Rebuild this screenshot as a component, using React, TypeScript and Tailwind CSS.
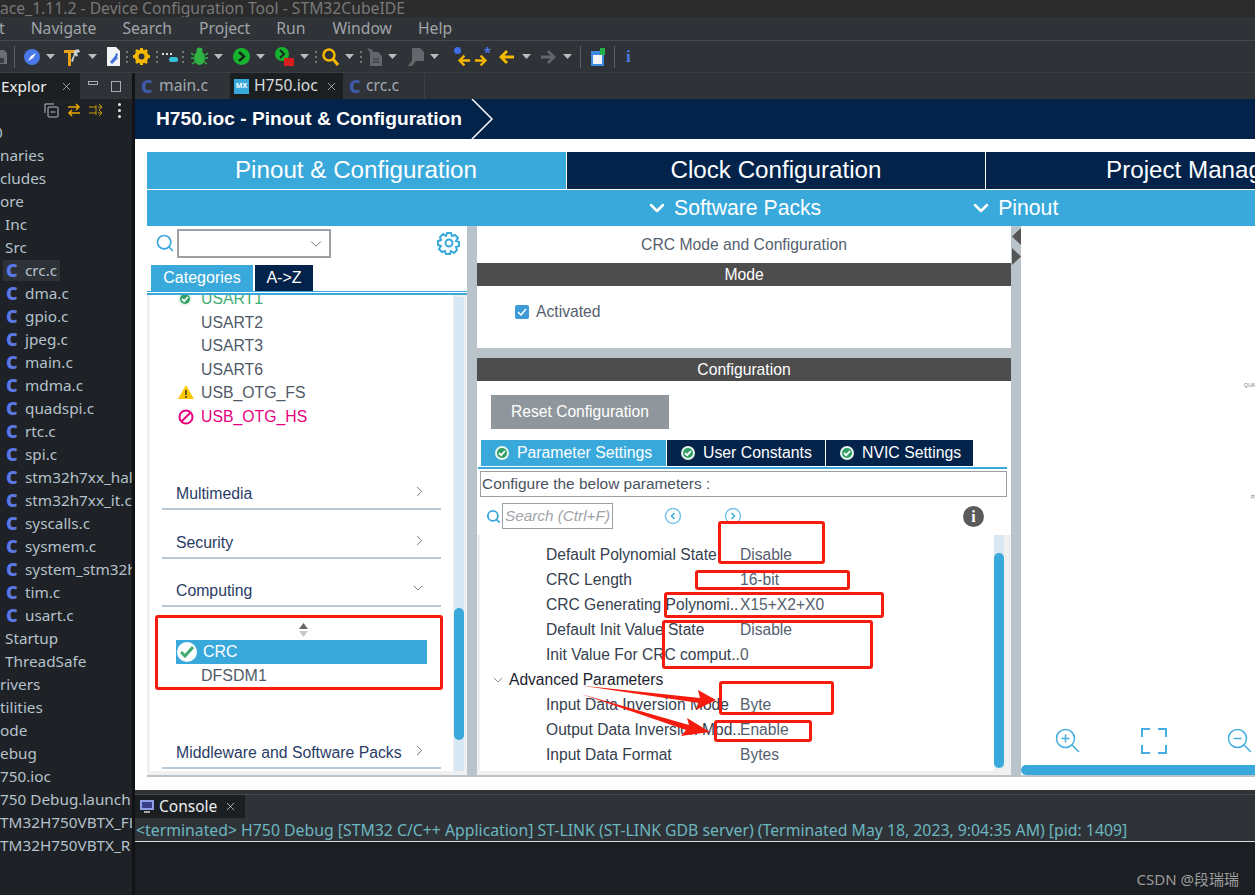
import { ChevronDown, ChevronRight, X, Search } from 'lucide-react';

const ide = "font-['Noto_Sans','Liberation_Sans',sans-serif]";

const files = ['dma.c', 'gpio.c', 'jpeg.c', 'main.c', 'mdma.c', 'quadspi.c', 'rtc.c', 'spi.c', 'stm32h7xx_hal', 'stm32h7xx_it.c', 'syscalls.c', 'sysmem.c', 'system_stm32h', 'tim.c', 'usart.c'];
const rowsAfter = [['Startup', 'pl-[5px]'], ['ThreadSafe', 'pl-[5px]'], ['rivers', ''], ['tilities', ''], ['ode', ''], ['ebug', ''], ['750.ioc', ''], ['750 Debug.launch', ''], ['TM32H750VBTX_FL', ''], ['TM32H750VBTX_R', '']];

const params: [string, string][] = [
  ['Default Polynomial State', 'Disable'],
  ['CRC Length', '16-bit'],
  ['CRC Generating Polynomi..', 'X15+X2+X0'],
  ['Default Init Value State', 'Disable'],
  ['Init Value For CRC comput..', '0'],
];
const advanced: [string, string][] = [
  ['Input Data Inversion Mode', 'Byte'],
  ['Output Data Inversion Mod..', 'Enable'],
  ['Input Data Format', 'Bytes'],
];

function Drop({ className = '' }: { className?: string }) {
  return <svg width="9" height="5" viewBox="0 0 9 5" className={className}><path d="M0 0h9L4.500 5z" fill="#b9bdc1" /></svg>;
}

function Dots({ className = '' }: { className?: string }) {
  return (
    <div className={`flex flex-col gap-[3px] ${className}`}>
      <span className="w-[2px] h-[2px] bg-[#777]" />
      <span className="w-[2px] h-[2px] bg-[#777]" />
      <span className="w-[2px] h-[2px] bg-[#777]" />
    </div>
  );
}

function Sep({ className = '' }: { className?: string }) {
  return <span className={`w-px h-[22px] bg-[#5a5e62] ${className}`} />;
}

function YellowArrow({ flip = false, color = '#f5b800' }: { flip?: boolean; color?: string }) {
  return (
    <svg width="17" height="16" viewBox="0 0 17 16" className={flip ? 'rotate-180' : ''}>
      <path d="M8 1L1 8l7 7 2-2-3.500-3.500H16v-3H6.500L10 3z" fill={color} />
    </svg>
  );
}

function Toolbar() {
  return (
    <div className="h-[32px] bg-[#2f3337] flex items-center border-b border-[#3a3e42] shrink-0 overflow-hidden">
      <svg width="16" height="16" viewBox="0 0 16 16" className="-ml-[8px] shrink-0"><path d="M1 1h11l3 3v11H1z" fill="#6b6f73" /><rect x="4" y="9" width="8" height="5" fill="#3a3e42" /></svg>
      <Sep className="ml-[6px]" />
      <svg width="16" height="18" viewBox="0 0 16 18" className="ml-[9px]"><circle cx="8" cy="9" r="8" fill="#4a78e8" /><path d="M12 5L9 10 4 13l3-5z" fill="#fff" /></svg>
      <Drop className="ml-[6px]" />
      <svg width="18" height="20" viewBox="0 0 18 20" className="ml-[8px]"><path d="M1 3h11v3H8v13H5V6H1z" fill="#e8a317" /><path d="M12 3c3-2 5 0 5 2l-3 1 1 3c-2 1-3 0-3-1l-2 7-2-1 3-7c-1-1 0-3 1-4z" fill="#c8ccd0" /></svg>
      <Drop className="ml-[7px]" />
      <svg width="15" height="19" viewBox="0 0 15 19" className="ml-[9px]"><path d="M1 0h9l4 4v15H1z" fill="#f1f3f5" /><path d="M4 15l5-6 1-3 2 1-1 3 1 1-6 6z" fill="#3f6fd8" /></svg>
      <Dots className="ml-[5px]" />
      <svg width="17" height="17" viewBox="0 0 17 17" className="ml-[5px]"><circle cx="8.500" cy="8.500" r="5" fill="none" stroke="#f5b800" strokeWidth="4" /><path d="M7 0h3v3H7zM7 14h3v3H7zM0 7h3v3H0zM14 7h3v3h-3zM2 3l2-2 2 2-2 2zM11 3l2-2 2 2-2 2zM2 14l2-2 2 2-2 2zM11 14l2-2 2 2-2 2z" fill="#f5b800" /></svg>
      <Dots className="ml-[6px]" />
      <svg width="16" height="10" viewBox="0 0 16 10" className="ml-[4px]"><rect x="0" y="1" width="2" height="2" fill="#ddd" /><rect x="4" y="1" width="2" height="2" fill="#ddd" /><rect x="8" y="1" width="2" height="2" fill="#ddd" /><rect x="7" y="5" width="9" height="5" rx="2.500" fill="#35c2d8" /></svg>
      <Dots className="ml-[4px]" />
      <svg width="17" height="19" viewBox="0 0 17 19" className="ml-[7px]"><ellipse cx="8.500" cy="11" rx="5.500" ry="7" fill="#2fb344" /><circle cx="8.500" cy="3.500" r="3" fill="#2fb344" /><path d="M0 6l3 2M17 6l-3 2M0 11h3M17 11h-3M1 17l3-2M16 17l-3-2" stroke="#2fb344" strokeWidth="1.500" /></svg>
      <Drop className="ml-[6px]" />
      <svg width="17" height="17" viewBox="0 0 17 17" className="ml-[10px]"><circle cx="8.500" cy="8.500" r="8.500" fill="#18b32e" /><path d="M6 4l5 4.500L6 13" fill="none" stroke="#14281a" strokeWidth="2.500" /></svg>
      <Drop className="ml-[6px]" />
      <svg width="19" height="20" viewBox="0 0 19 20" className="ml-[10px]"><circle cx="7" cy="7" r="7" fill="#18b32e" /><path d="M5 3l4 4-4 4" fill="none" stroke="#14281a" strokeWidth="2" /><rect x="9" y="11" width="10" height="8" rx="1" fill="#d81e1e" /></svg>
      <Drop className="ml-[6px]" />
      <Dots className="ml-[6px]" />
      <svg width="17" height="18" viewBox="0 0 17 18" className="ml-[5px]"><circle cx="7" cy="7" r="5.500" fill="none" stroke="#f5b800" strokeWidth="2.500" /><path d="M11 11l5 6" stroke="#f5b800" strokeWidth="3" /></svg>
      <Drop className="ml-[6px]" />
      <Dots className="ml-[6px]" />
      <svg width="16" height="18" viewBox="0 0 16 18" className="ml-[5px]"><path d="M3 4h8l4 4v10H3z" fill="#63676b" /><path d="M0 0l6 2-2 4z" fill="#63676b" /><path d="M6 11h6M6 14h6" stroke="#2f3337" /></svg>
      <Drop className="ml-[5px]" />
      <svg width="16" height="18" viewBox="0 0 16 18" className="ml-[11px]"><path d="M4 0h8l4 4v9H4z" fill="#63676b" /><path d="M0 18l5-7 3 2-4 5z" fill="#63676b" /></svg>
      <Drop className="ml-[6px]" />
      <div className="ml-[15px] relative w-[17px] h-[20px]">
        <span className="absolute left-[0px] top-[0px] w-[7px] h-[7px] rounded-full bg-[#3f6fe8]" />
        <svg width="14" height="13" viewBox="0 0 17 16" className="absolute left-[3px] top-[7px]"><path d="M8 1L1 8l7 7 2-2-3.500-3.500H16v-3H6.500L10 3z" fill="#f5b800" /></svg>
      </div>
      <div className="ml-[3px] relative w-[17px] h-[20px]">
        <span className="absolute right-[0px] top-[0px] text-[13px] leading-[10px] text-[#4a78e8] font-bold">*</span>
        <svg width="14" height="13" viewBox="0 0 17 16" className="absolute left-[0px] top-[7px] rotate-180"><path d="M8 1L1 8l7 7 2-2-3.500-3.500H16v-3H6.500L10 3z" fill="#f5b800" /></svg>
      </div>
      <div className="ml-[7px] flex"><YellowArrow /></div>
      <Drop className="ml-[7px]" />
      <div className="ml-[9px] flex"><YellowArrow flip color="#63676b" /></div>
      <Drop className="ml-[6px]" />
      <Sep className="ml-[8px]" />
      <svg width="15" height="18" viewBox="0 0 15 18" className="ml-[10px]"><rect x="0" y="3" width="13" height="15" fill="#3d8be0" /><rect x="2" y="7" width="9" height="9" fill="#f2f4f6" /><rect x="9" y="0" width="5" height="7" fill="#22b14c" /></svg>
      <Sep className="ml-[8px]" />
      <span className="ml-[11px] text-[#4a78e8] text-[17px] font-bold leading-none font-['Liberation_Serif',serif]">i</span>
    </div>
  );
}

function Sidebar() {
  return (
    <div className={`w-[132px] shrink-0 flex flex-col bg-[#1e2125] overflow-hidden ${ide}`}>
      <div className="h-[26px] flex bg-[#2f3337] shrink-0 text-[#eceff1]">
        <div className="w-[80px] bg-[#1c1f22] flex items-center pl-[1px] text-[15.3px]">
          Explor
          <X size={13} strokeWidth={1.25} className="ml-[13px] text-[#d5d8da]" />
        </div>
        <div className="flex items-center">
          <span className="ml-[8px] w-[10px] h-[4px] border border-[#a8acb0] -mt-[6px]" />
          <span className="ml-[13px] w-[10px] h-[11px] border border-[#a8acb0]" />
        </div>
      </div>
      <div className="h-[22px] flex items-center justify-end pr-[11px] gap-[8px] shrink-0">
        <svg width="15" height="15" viewBox="0 0 15 15"><path d="M1 10V1h9" fill="none" stroke="#b8bcc0" /><rect x="4" y="4" width="10" height="10" rx="1" fill="none" stroke="#b8bcc0" /><path d="M6.500 9h5" stroke="#b8bcc0" /></svg>
        <svg width="14" height="14" viewBox="0 0 14 14"><path d="M1 4h10M9 1l3 3-3 3M13 10H3M5 7l-3 3 3 3" fill="none" stroke="#e8a800" strokeWidth="1.500" /></svg>
        <svg width="14" height="14" viewBox="0 0 14 14"><path d="M0 4h7M0 10h7M7 2v10M9 4h4M9 10h4M10 1l3 3-3 3M10 7l3 3-3 3" fill="none" stroke="#c89a10" /></svg>
        <div className="flex flex-col gap-[3px] ml-[7px]">
          <span className="w-[3px] h-[3px] rounded-full bg-[#e4e6e8]" />
          <span className="w-[3px] h-[3px] rounded-full bg-[#e4e6e8]" />
          <span className="w-[3px] h-[3px] rounded-full bg-[#e4e6e8]" />
        </div>
      </div>
      <div className="text-[15.3px] text-[#b5c1cc] whitespace-nowrap [&>div]:h-[23px] [&>div]:leading-[23px]">
        <div className="-ml-[6px]">0</div>
        <div>naries</div>
        <div>cludes</div>
        <div>ore</div>
        <div className="pl-[5px]">Inc</div>
        <div className="pl-[5px]">Src</div>
        <div className="flex items-center pl-[3px]">
          <div className="h-[21px] w-[57px] bg-[#2e3236] flex items-center pl-[3px]">
            <span className="w-[19px] text-[#5b78e6] font-black text-[18px]">C</span>crc.c
          </div>
        </div>
        {files.map((f) => (
          <div key={f} className="flex items-center pl-[6px]">
            <span className="w-[19px] shrink-0 text-[#5b78e6] font-black text-[18px]">C</span>{f}
          </div>
        ))}
        {rowsAfter.map(([t, c]) => (
          <div key={t} className={c}>{t}</div>
        ))}
      </div>
    </div>
  );
}

function CheckDot({ size = 14 }: { size?: number }) {
  return (
    <svg width={size} height={size} viewBox="0 0 14 14" className="shrink-0">
      <circle cx="7" cy="7" r="7" fill="#e8f5ec" />
      <circle cx="7" cy="7" r="5" fill="#2f9e62" />
      <path d="M4 7l2.200 2.200L10 5" fill="none" stroke="#fff" strokeWidth="1.800" />
    </svg>
  );
}

function Category({ name, open = false, className = '' }: { name: string; open?: boolean; className?: string }) {
  return (
    <div className={`h-[32px] pt-px shrink-0 ml-[12px] w-[279px] pl-[14px] border-b-2 border-[#b9c8d6] flex items-center justify-between pr-[15px] text-[15.8px] text-[#2a3c66] ${className}`}>
      {name}
      {open ? <ChevronDown size={16} strokeWidth={1.25} className="text-[#666] -mt-[4px]" /> : <ChevronRight size={17} strokeWidth={1.25} className="text-[#666] -mt-[4px] -mr-[2px]" />}
    </div>
  );
}

function LeftPanel() {
  return (
    <div className="w-[320px] shrink-0 flex flex-col bg-white">
      <div className="h-[39px] flex items-start pt-[3px] pl-[8px] pr-[6px] shrink-0">
        <Search size={20} strokeWidth={2} className="text-[#39a9dc] shrink-0 mt-[4px]" />
        <div className="ml-[2px] w-[154px] h-[29px] border-2 border-[#9aa0a4] flex items-center justify-end pr-[4px]">
          <ChevronDown size={18} strokeWidth={1.25} className="text-[#666]" />
        </div>
        <svg width="24" height="24" viewBox="0 0 24 24" className="ml-auto mt-[2px]"><path d="M10 2h4l1 3 3-1 3 3-2 3 3 1v4l-3 1 1 3-3 3-3-2-1 3h-4l-1-3-3 1-3-3 2-3-3-1v-4l3-1-1-3 3-3 3 2z" fill="none" stroke="#39a9dc" strokeWidth="2" /><circle cx="12" cy="12" r="3.500" fill="none" stroke="#39a9dc" strokeWidth="2" /></svg>
      </div>
      <div className="h-[26px] flex pl-[4px] shrink-0 text-[16px]">
        <div className="w-[102px] bg-[#39a9dc] text-white flex items-center justify-center">Categories</div>
        <div className="ml-[2px] w-[58px] bg-[#03234b] text-white flex items-center justify-center">A-&gt;Z</div>
      </div>
      <div className="h-[4px] border-t border-b-2 border-[#39a9dc] shrink-0" />
      <div className="flex-1 flex min-h-0 bg-[#f0f0f0] pl-[3px] pr-[3px] pb-[4px] overflow-hidden">
        <div className="flex-1 bg-white flex flex-col overflow-hidden">
          <div className="-mt-[8px] shrink-0 text-[15.8px] text-[#4f5a68] [&>div]:h-[23.6px] [&>div]:flex [&>div]:items-center [&>div]:pl-[51px]">
            <div className="relative text-[#3fae72]">
              <span className="absolute left-[28px] top-[5px]"><CheckDot /></span>
              USART1
            </div>
            <div>USART2</div>
            <div>USART3</div>
            <div>USART6</div>
            <div className="relative">
              <svg width="16" height="14" viewBox="0 0 16 14" className="absolute left-[28px] top-[4px]"><path d="M8 0l8 14H0z" fill="#ffc800" /><path d="M8 5v5M8 11v2" stroke="#333" strokeWidth="1.500" /></svg>
              USB_OTG_FS
            </div>
            <div className="relative text-[#e6007e]">
              <svg width="16" height="16" viewBox="0 0 16 16" className="absolute left-[28px] top-[4px]"><circle cx="8" cy="8" r="6.500" fill="none" stroke="#e6007e" strokeWidth="2" /><path d="M3.500 12.500l9-9" stroke="#e6007e" strokeWidth="2" /></svg>
              USB_OTG_HS
            </div>
          </div>
          <Category name="Multimedia" className="mt-[49.4px]" />
          <Category name="Security" className="mt-[17px]" />
          <Category name="Computing" open className="mt-[16px]" />
          <div className="h-[33px] shrink-0 flex flex-col items-center justify-end pb-[3px] pl-[4px]">
            <svg width="11" height="14" viewBox="0 0 11 14"><path d="M5.500 0L10 6H1z" fill="#666" /><path d="M5.500 14L10 8H1z" fill="#c8c8c8" /></svg>
          </div>
          <div className="ml-[26px] shrink-0 w-[251px] h-[24px] bg-[#39a9dc] flex items-center pl-[1px] text-[16px] text-white">
            <span className="w-[20px] h-[20px] rounded-full bg-white flex items-center justify-center mr-[6px]">
              <svg width="14" height="12" viewBox="0 0 14 12"><path d="M1 6l4 4 8-9" fill="none" stroke="#3fae72" strokeWidth="3" /></svg>
            </span>
            CRC
          </div>
          <div className="pl-[51px] shrink-0 h-[24px] flex items-center text-[16px] text-[#4f5a68]">DFSDM1</div>
          <Category name="Middleware and Software Packs" className="mt-[49px]" />
        </div>
        <div className="w-[10px] ml-[1px] mt-[2px] bg-[#d8e7f4] flex flex-col justify-end shrink-0">
          <div className="h-[132px] mb-[31px] bg-[#39a9dc] rounded-[5px]" />
        </div>
      </div>
    </div>
  );
}

function ParamRow({ row }: { row: [string, string] }) {
  return (
    <div className="h-[25px] flex items-center text-[15.6px] whitespace-nowrap pl-[66px]">
      <span className="w-[194px] text-[#35404e]">{row[0]}</span>
      <span className="text-[#55606e]">{row[1]}</span>
    </div>
  );
}

function MiddlePanel() {
  return (
    <div className="w-[534px] shrink-0 flex flex-col bg-white">
      <div className="h-[37px] flex items-center justify-center text-[15.7px] text-[#55606e] shrink-0">CRC Mode and Configuration</div>
      <div className="h-[23px] bg-[#4d4d4d] text-white text-[15.7px] flex items-center justify-center shrink-0">Mode</div>
      <div className="h-[62px] flex items-center pl-[38px] pb-[10px] text-[15.7px] text-[#55606e] shrink-0">
        <span className="w-[14px] h-[14px] rounded-[2px] bg-[#3d9bd8] flex items-center justify-center mr-[7px]">
          <svg width="10" height="8" viewBox="0 0 10 8"><path d="M1 4l3 3 5-6" fill="none" stroke="#fff" strokeWidth="1.500" /></svg>
        </span>
        Activated
      </div>
      <div className="h-[10px] bg-[#b9c4ca] shrink-0" />
      <div className="h-[23px] bg-[#4d4d4d] text-white text-[15.7px] flex items-center justify-center shrink-0">Configuration</div>
      <div className="pl-[14px] pt-[14px] shrink-0">
        <div className="w-[178px] h-[34px] bg-[#90979c] text-white text-[15.6px] flex items-center justify-center">Reset Configuration</div>
      </div>
      <div className="flex h-[26px] ml-[4px] mt-[11px] text-[15.8px] text-white shrink-0">
        <div className="w-[185px] bg-[#39a9dc] flex items-center pl-[14px] gap-[8px]"><CheckDot />Parameter Settings</div>
        <div className="ml-px w-[158px] bg-[#03234b] flex items-center pl-[14px] gap-[8px]"><CheckDot />User Constants</div>
        <div className="ml-px w-[147px] bg-[#03234b] flex items-center pl-[14px] gap-[8px]"><CheckDot />NVIC Settings</div>
      </div>
      <div className="h-[3px] mx-px mt-[1px] w-[529px] border-t-2 border-[#39a9dc] shrink-0" />
      <div className="ml-[3px] mt-[1px] w-[527px] h-[26px] border border-[#9aa0a4] text-[15.45px] text-[#4a5260] flex items-center pl-px shrink-0">Configure the below parameters :</div>
      <div className="h-[32px] mt-[6px] flex items-start pl-[9px] shrink-0">
        <Search size={15} strokeWidth={3} className="text-[#39a9dc] shrink-0 mt-[6px]" />
        <div className="ml-[1px] w-[111px] h-[26px] border border-[#9aa0a4] italic text-[15.3px] text-[#a0a4a8] flex items-center pl-[2px] whitespace-nowrap overflow-hidden">Search (Ctrl+F)</div>
        <svg width="18" height="18" viewBox="0 0 18 18" className="ml-[51px] mt-[4px]"><circle cx="9" cy="9" r="7.500" fill="none" stroke="#7cc4e8" strokeWidth="1.500" /><path d="M10.500 6l-3 3 3 3" fill="none" stroke="#39a9dc" strokeWidth="1.500" /></svg>
        <svg width="18" height="18" viewBox="0 0 18 18" className="ml-[42px] mt-[4px]"><circle cx="9" cy="9" r="7.500" fill="none" stroke="#7cc4e8" strokeWidth="1.500" /><path d="M7.500 6l3 3-3 3" fill="none" stroke="#39a9dc" strokeWidth="1.500" /></svg>
        <span className="ml-[221px] mt-[3px] w-[21px] h-[21px] rounded-full bg-[#5a5a5a] text-white font-bold text-[16px] flex items-center justify-center font-['Liberation_Serif',serif]">i</span>
      </div>
      <div className="flex-1 min-h-0 flex bg-[#f0f0f0] pl-[3px] pr-[3px] pb-[4px]">
        <div className="w-[514px] bg-white pt-[7px] overflow-hidden">
          {params.map((r) => <ParamRow key={r[0]} row={r} />)}
          <div className="h-[25px] flex items-center text-[15.6px] text-[#1c2430] pl-[10px] gap-[3px]">
            <ChevronDown size={16} strokeWidth={1.25} className="text-[#777]" />
            Advanced Parameters
          </div>
          {advanced.map((r) => <ParamRow key={r[0]} row={r} />)}
        </div>
        <div className="w-[10px] bg-[#d8e7f4] flex flex-col justify-end mb-[3px]">
          <div className="h-[215px] bg-[#39a9dc] rounded-[5px]" />
        </div>
      </div>
    </div>
  );
}

function RightPanel() {
  return (
    <div className="flex-1 relative bg-white flex flex-col justify-end overflow-hidden">
      <span className="absolute left-[223px] top-[156px] text-[5px] leading-[6px] text-[#777] whitespace-nowrap">QUAD</span>
      <span className="absolute left-[230px] top-[268px] text-[5px] leading-[6px] text-[#777] whitespace-nowrap">PI</span>
      <div className="flex items-center pl-[34px] gap-[60px] pb-[11px]">
        <svg width="26" height="26" viewBox="0 0 26 26" className="shrink-0"><circle cx="10.500" cy="10.500" r="9" fill="none" stroke="#45aee0" strokeWidth="1.500" /><path d="M6.500 10.500h8M10.500 6.500v8M17 17l7 7" stroke="#45aee0" strokeWidth="1.500" /></svg>
        <svg width="26" height="26" viewBox="0 0 26 26" className="shrink-0"><path d="M1 9V1h8M17 1h8v8M25 17v8h-8M9 25H1v-8" fill="none" stroke="#45aee0" strokeWidth="2" /></svg>
        <svg width="26" height="26" viewBox="0 0 26 26" className="shrink-0"><circle cx="10.500" cy="10.500" r="9" fill="none" stroke="#45aee0" strokeWidth="1.500" /><path d="M6.500 10.500h8M17 17l7 7" stroke="#45aee0" strokeWidth="1.500" /></svg>
      </div>
      <div className="h-[10px] bg-[#39a9dc] rounded-l-[5px] shrink-0" />
    </div>
  );
}

function Sash() {
  return <div className="w-[10px] shrink-0 bg-[#b9c4ca]" />;
}

function Editor() {
  return (
    <div className="flex-1 min-h-0 bg-white flex flex-col font-['Liberation_Sans',Arial,sans-serif]">
      <div className="h-[40px] bg-[#03234b] flex items-center pl-[21px] text-white font-bold text-[19.2px] shrink-0">
        H750.ioc - Pinout &amp; Configuration
        <svg width="24" height="40" viewBox="0 0 24 40" className="ml-[9px]"><path d="M1 0l20 20L1 40" fill="none" stroke="#fff" strokeWidth="1.500" /></svg>
      </div>
      <div className="pl-[12px] pt-[13px] flex-1 min-h-0 flex flex-col pb-[13px]">
        <div className="h-[37px] flex text-[24.2px] text-white shrink-0">
          <div className="w-[419px] bg-[#39a9dc] flex items-center justify-center pr-[1px]">Pinout &amp; Configuration</div>
          <div className="ml-px w-[418px] bg-[#03234b] flex items-center justify-center">Clock Configuration</div>
          <div className="ml-px flex-1 bg-[#03234b] flex items-center pl-[120px] whitespace-nowrap overflow-hidden">Project Manager</div>
        </div>
        <div className="h-[36px] mt-px bg-[#39a9dc] flex items-center text-[21.2px] text-white shrink-0 whitespace-nowrap">
          <ChevronDown size={24} strokeWidth={2.5} className="ml-[498px]" />
          <span className="ml-[5px]">Software Packs</span>
          <ChevronDown size={24} strokeWidth={2.5} className="ml-[148px]" />
          <span className="ml-[5px]">Pinout</span>
        </div>
        <div className="flex-1 min-h-0 flex border-b-[2px] border-[#b9c4ca]">
          <LeftPanel />
          <Sash />
          <MiddlePanel />
          <Sash />
          <RightPanel />
        </div>
      </div>
    </div>
  );
}

function Console() {
  return (
    <div className={`h-[105px] shrink-0 flex flex-col bg-[#1b1e22] ${ide}`}>
      <div className="h-[51px] bg-[#2f3337] flex flex-col shrink-0">
        <div className="h-[5px] border-b border-[#45494d]" />
        <div className="h-[23px] w-[110px] bg-[#1c1f22] flex items-center pl-[5px] text-[15.5px] text-[#eceff1] shrink-0">
          <svg width="14" height="13" viewBox="0 0 14 13" className="mr-[5px]"><rect width="14" height="10" fill="#8fa0e8" /><rect x="2" y="2" width="10" height="6" fill="#3a3f8a" /><rect x="4" y="11" width="6" height="2" fill="#aaa" /></svg>
          Console
          <X size={13} strokeWidth={1.25} className="ml-[7px]" />
        </div>
        <div className="flex-1 flex items-center pl-px pt-[2px] text-[15.8px] text-[#6cb6c0] whitespace-nowrap overflow-hidden">
          &lt;terminated&gt; H750 Debug [STM32 C/C++ Application] ST-LINK (ST-LINK GDB server) (Terminated May 18, 2023, 9:04:35 AM) [pid: 1409]
        </div>
      </div>
      <div className="h-px bg-[#d8d8d8] shrink-0" />
    </div>
  );
}

const redBoxes = [
  'left-[155px] top-[615px] w-[288px] h-[75px]',
  'left-[718px] top-[521px] w-[107px] h-[43px]',
  'left-[695px] top-[570px] w-[155px] h-[20px]',
  'left-[664px] top-[592px] w-[220px] h-[26px]',
  'left-[662px] top-[620px] w-[211px] h-[49px]',
  'left-[719px] top-[681px] w-[115px] h-[34px]',
  'left-[714px] top-[720px] w-[98px] h-[22px]',
];

export default function App() {
  return (
    <div className={`relative w-[1255px] h-[895px] overflow-hidden flex flex-col bg-[#1b1e22] ${ide}`}>
      <div className="h-[17px] bg-[#2b2b2b] text-[15.7px] leading-[17px] text-[#77797b] whitespace-nowrap overflow-hidden shrink-0">
        ace_1.11.2 - Device Configuration Tool - STM32CubeIDE
      </div>
      <div className="h-[24px] bg-[#2f3337] border-b border-[#45494d] flex items-center text-[15.7px] text-[#a0a4a8] shrink-0">
        <span className="-ml-[1px]">t</span>
        <span className="ml-[26px]">Navigate</span>
        <span className="ml-[26px]">Search</span>
        <span className="ml-[27px]">Project</span>
        <span className="ml-[26px]">Run</span>
        <span className="ml-[27px]">Window</span>
        <span className="ml-[26px]">Help</span>
      </div>
      <Toolbar />
      <div className="flex-1 min-h-0 flex">
        <Sidebar />
        <div className="w-[3px] shrink-0 bg-[#111316]" />
        <div className="flex-1 min-w-0 flex flex-col">
          <div className={`h-[26px] bg-[#2f3337] flex text-[15.7px] shrink-0 ${ide}`}>
            <div className="w-[95px] flex items-center pl-[6px] text-[#a0a8b0]">
              <span className="w-[18px] text-[#3f5aa8] font-black text-[18px]">C</span>main.c
            </div>
            <div className="w-[113px] bg-[#1c1f22] flex items-center pl-[4px] text-[#d8dcdf]">
              <span className="w-[15px] h-[15px] bg-[#39a9dc] text-white text-[7px] font-bold flex items-center justify-center mr-[5px]">MX</span>
              H750.ioc
              <X size={13} strokeWidth={1.25} className="ml-[7px]" />
            </div>
            <div className="w-[82px] border-r border-[#3c4044] flex items-center pl-[6px] text-[#a0a8b0]">
              <span className="w-[17px] text-[#3f5aa8] font-black text-[18px]">C</span>crc.c
            </div>
          </div>
          <Editor />
          <Console />
        </div>
      </div>

      {/* markup drawn over the screenshot */}
      {redBoxes.map((b) => (
        <div key={b} className={`absolute border-[3px] border-[#f61c0d] rounded-[3px] ${b}`} />
      ))}
      <svg width="140" height="60" viewBox="0 0 140 60" className="absolute left-[580px] top-[684px]">
        <path d="M1 1.500L120 14l-2-8 18 10-20 10 3-7z" fill="#f61c0d" />
        <path d="M1 10l108 31-2-7 23 14-29 4 5-6z" fill="#f61c0d" />
      </svg>
      <div className="absolute left-[1012px] top-[228px] flex flex-col gap-[3px]">
        <svg width="9" height="17" viewBox="0 0 9 17"><path d="M9 0v17L0 8.500z" fill="#555" /></svg>
        <svg width="9" height="17" viewBox="0 0 9 17"><path d="M0 0v17l9-8.500z" fill="#555" /></svg>
      </div>
      <div className="absolute right-[16px] top-[868px] text-[15px] text-[#9c9c9c] whitespace-nowrap font-['Noto_Sans','Noto_Sans_CJK_SC',sans-serif]">CSDN @段瑞瑞</div>
    </div>
  );
}
